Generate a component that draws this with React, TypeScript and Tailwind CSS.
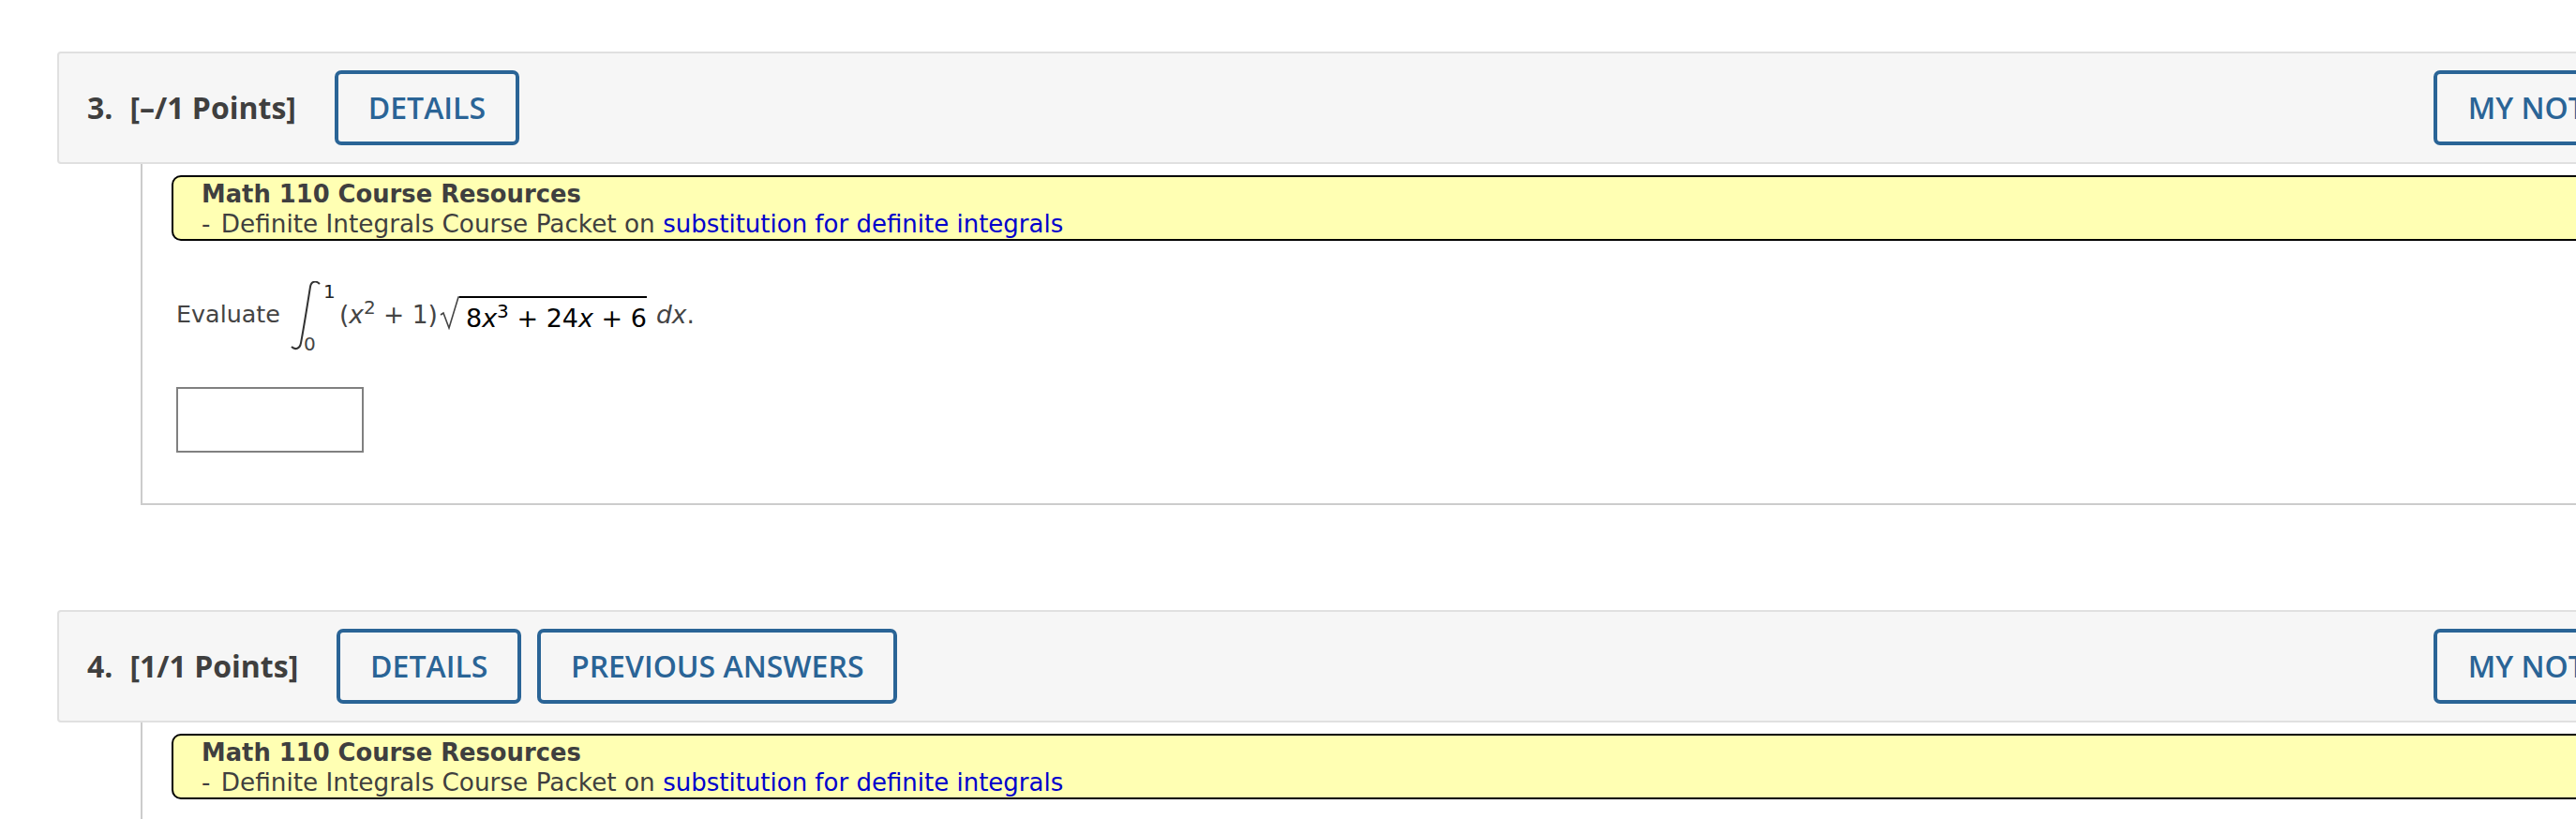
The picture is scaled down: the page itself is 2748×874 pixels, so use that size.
import React from 'react';

function OutlineButton({ label, className = '' }: { label: string; className?: string }) {
  return (
    <button className={`flex h-[80px] shrink-0 items-center justify-center rounded-[7px] border-[4px] border-[#2a6496] font-['Open_Sans',sans-serif] text-[32px] font-semibold text-[#2a6496] ${className}`}>
      {label}
    </button>
  );
}

function QuestionHeader({ number, points, labels }: { number: string; points: string; labels: { text: string; width: string }[] }) {
  return (
    <div className="flex h-[120px] items-center rounded-[4px] border-2 border-[#e0e0e0] bg-[#f6f6f6] pl-[30px] pr-[28px]">
      <div className="mr-[41px] flex gap-[18px] whitespace-pre font-['Open_Sans',sans-serif] text-[32px] font-bold text-[#3f3f3f]">
        <span>{number}.</span>
        <span>{points}</span>
      </div>
      <div className="flex gap-[17px]">
        {labels.map((l) => (
          <OutlineButton key={l.text} label={l.text} className={l.width} />
        ))}
      </div>
      <OutlineButton label="MY NOTES" className="ml-auto w-[234px]" />
    </div>
  );
}

function ResourceBox() {
  return (
    <div className="flex h-[70px] flex-col justify-center rounded-[10px] border-2 border-black bg-[#ffffb3] pl-[30px] pt-[2px] font-['DejaVu_Sans',sans-serif] leading-[32px] text-[#3f3f3f]">
      <div className="text-[25.8px] font-bold">Math 110 Course Resources</div>
      <div className="text-[26px]">
        -<span className="ml-[3px] text-[26.3px]"> Definite Integrals Course Packet on </span>
        <a className="text-[#0000cc]">substitution for definite integrals</a>
      </div>
    </div>
  );
}

function MathExpression() {
  return (
    <div className="flex h-[74px] items-center pb-[3px] font-['DejaVu_Sans',sans-serif] text-[25.4px] text-[#444444]">
      <span>Evaluate</span>
      <span className="relative ml-[11px] h-[74px] w-[52px] shrink-0 self-start">
        <svg className="absolute left-0 top-0" width="34" height="74" viewBox="0 0 34 74" fill="none">
          <path d="M31 3C27 -1 22 0 21 6C18 25 14 50 11 66C10 72 5 74 1 70" stroke="#333333" strokeWidth="2" />
        </svg>
        <span className="absolute left-[35px] top-[-4px] text-[20px] text-[#222222]">1</span>
        <span className="absolute left-[14px] top-[52px] text-[20px] text-[#444444]">0</span>
      </span>
      <span className="whitespace-pre text-[26.5px]">
        (<i>x</i><sup className="text-[20px] leading-none">2</sup> + 1)
      </span>
      <span className="ml-[2px] mt-[-2px] flex items-start self-start pt-[18px]">
        <svg width="21" height="36" viewBox="0 0 21 36" fill="none">
          <path d="M1 20l3-2 6 16L20 1h1" stroke="#444444" strokeWidth="1.6" />
        </svg>
        <span className="whitespace-pre border-t-2 border-black pl-[7px] text-[27px] leading-[44px] text-black">
          8<i>x</i><sup className="text-[20px] leading-none">3</sup> + 24<i>x</i> + 6
        </span>
      </span>
      <span className="ml-[10px] whitespace-pre text-[26.5px]"><i>dx</i>.</span>
    </div>
  );
}

export default function App() {
  return (
    <div className="h-screen w-full overflow-hidden bg-white">
      <div className="w-[2860px] pl-[61px] pt-[55px]">
        <QuestionHeader number="3" points="[–/1 Points]" labels={[{ text: 'DETAILS', width: 'w-[197px]' }]} />
        <div className="ml-[89px] h-[364px] border-b-2 border-l-2 border-[#cccccc] pl-[31px] pt-[12px]">
          <ResourceBox />
          <div className="mt-[43px] pl-[5px]">
            <MathExpression />
            <input className="mt-[39px] block h-[70px] w-[200px] border-2 border-[#808080] bg-white" />
          </div>
        </div>
        <div className="mt-[112px]">
          <QuestionHeader
            number="4"
            points="[1/1 Points]"
            labels={[
              { text: 'DETAILS', width: 'w-[197px]' },
              { text: 'PREVIOUS ANSWERS', width: 'w-[384px]' },
            ]}
          />
        </div>
        <div className="ml-[89px] h-[200px] border-l-2 border-[#cccccc] pl-[31px] pt-[12px]">
          <ResourceBox />
        </div>
      </div>
    </div>
  );
}
